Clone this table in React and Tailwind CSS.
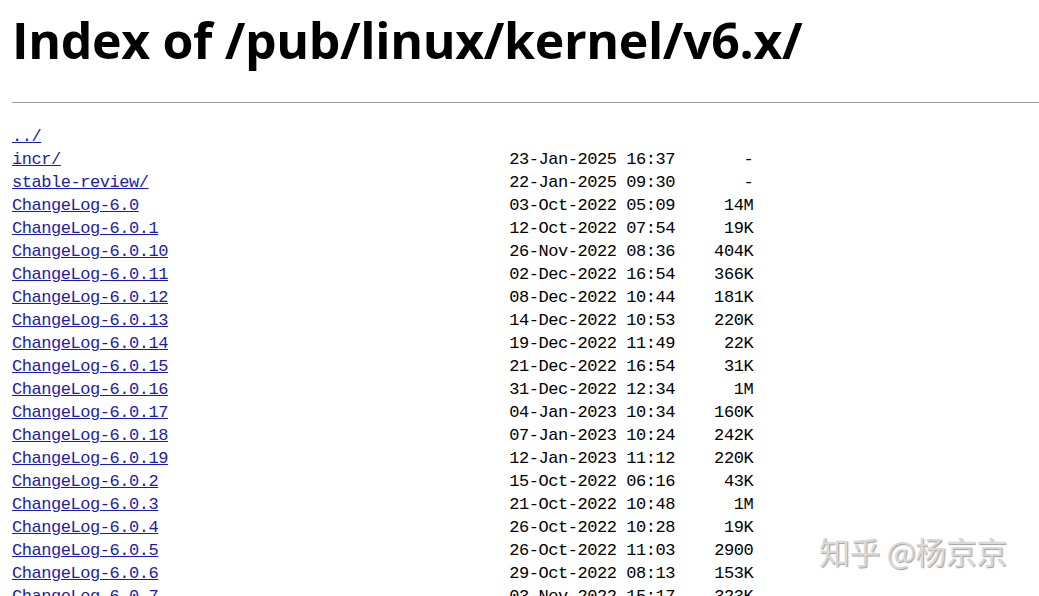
import React from "react";

const rows = [
  ["../", "", ""],
  ["incr/", "23-Jan-2025 16:37", "-"],
  ["stable-review/", "22-Jan-2025 09:30", "-"],
  ["ChangeLog-6.0", "03-Oct-2022 05:09", "14M"],
  ["ChangeLog-6.0.1", "12-Oct-2022 07:54", "19K"],
  ["ChangeLog-6.0.10", "26-Nov-2022 08:36", "404K"],
  ["ChangeLog-6.0.11", "02-Dec-2022 16:54", "366K"],
  ["ChangeLog-6.0.12", "08-Dec-2022 10:44", "181K"],
  ["ChangeLog-6.0.13", "14-Dec-2022 10:53", "220K"],
  ["ChangeLog-6.0.14", "19-Dec-2022 11:49", "22K"],
  ["ChangeLog-6.0.15", "21-Dec-2022 16:54", "31K"],
  ["ChangeLog-6.0.16", "31-Dec-2022 12:34", "1M"],
  ["ChangeLog-6.0.17", "04-Jan-2023 10:34", "160K"],
  ["ChangeLog-6.0.18", "07-Jan-2023 10:24", "242K"],
  ["ChangeLog-6.0.19", "12-Jan-2023 11:12", "220K"],
  ["ChangeLog-6.0.2", "15-Oct-2022 06:16", "43K"],
  ["ChangeLog-6.0.3", "21-Oct-2022 10:48", "1M"],
  ["ChangeLog-6.0.4", "26-Oct-2022 10:28", "19K"],
  ["ChangeLog-6.0.5", "26-Oct-2022 11:03", "2900"],
  ["ChangeLog-6.0.6", "29-Oct-2022 08:13", "153K"],
  ["ChangeLog-6.0.7", "03-Nov-2022 15:17", "323K"],
];

export default function App() {
  return (
    <div className="relative h-[596px] w-[1039px] overflow-hidden bg-white text-black">
      <div className="pl-[12px]">
        <h1
          className="pt-[10px] text-[50px] font-bold leading-[60px] tracking-[-0.35px]"
          style={{ fontFamily: '"Open Sans", "Noto Sans", sans-serif' }}
        >
          Index of /pub/linux/kernel/v6.x/
        </h1>
        <hr className="mt-[32px] border-0 border-t border-[#9a9a9a]" />
        <pre
          className="mt-[22px] text-[17px] leading-[23px] tracking-[-0.45px]"
          style={{ fontFamily: '"Liberation Mono", monospace' }}
        >
          {rows.map(([name, date, size], i) => (
            <div key={i}>
              <a href="#" className="text-[#1c1ca8] underline">
                {name}
              </a>
              {date ? " ".repeat(51 - name.length) + date + size.padStart(8, " ") : ""}
            </div>
          ))}
        </pre>
      </div>
      <div
        className="absolute left-[819px] top-[531px] text-[31px] leading-[40px] tracking-[-0.5px] text-[#d9d9d9]"
        style={{
          fontFamily: '"Noto Sans CJK SC", sans-serif',
          textShadow: "1px 1px 1px #a0a0a0",
        }}
      >
        知乎 @杨京京
      </div>
    </div>
  );
}
